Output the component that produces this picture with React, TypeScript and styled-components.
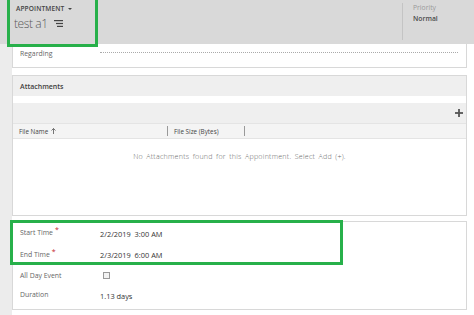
import React from "react";
import styled, { createGlobalStyle } from "styled-components";

const GlobalStyle = createGlobalStyle`
  html, body {
    margin: 0;
    padding: 0;
    background: #ffffff;
    font-family: "Open Sans", "Noto Sans", sans-serif;
    color: #444444;
  }
`;

const Page = styled.div`
  position: relative;
  width: 474px;
  height: 315px;
  overflow: hidden;
  display: flex;
  flex-direction: column;
`;

/* header strip */
const Header = styled.div`
  height: 44px;
  flex-shrink: 0;
  background: #d9d9d9;
  display: flex;
`;

const TitleBlock = styled.div`
  flex: 1;
  padding: 4px 0 0 16px;
  display: flex;
  flex-direction: column;
`;

const EntityType = styled.div`
  display: flex;
  align-items: center;
  gap: 4px;
  font-size: 6.6px;
  font-weight: 600;
  letter-spacing: 0.1px;
  color: #444;
  height: 9px;
`;

const Caret = styled.span`
  width: 0;
  height: 0;
  border-left: 2px solid transparent;
  border-right: 2px solid transparent;
  border-top: 2.5px solid #444;
`;

const RecordName = styled.div`
  display: flex;
  align-items: center;
  gap: 6px;
  margin-top: 2px;
  margin-left: -2px;
  font-size: 12px;
  font-weight: 300;
  letter-spacing: -0.4px;
  color: #5a5a5a;
`;

const PriorityBlock = styled.div`
  width: 61px;
  margin: 3px 0 4px;
  border-left: 1px solid #c4c4c4;
  padding: 0 0 0 10px;
  display: flex;
  flex-direction: column;
`;

const PriorityLabel = styled.div`
  font-size: 6.8px;
  color: #9a9a9a;
  height: 11px;
`;

const PriorityValue = styled.div`
  font-size: 6.8px;
  font-weight: 600;
  color: #4a4a4a;
`;

/* body */
const Body = styled.div`
  flex: 1;
  display: flex;
`;

const Rail = styled.div`
  width: 12px;
  background: #ececec;
`;

const Content = styled.div`
  width: 455px;
  display: flex;
  flex-direction: column;
`;

const Card = styled.div<{ $noTop?: boolean; $height: number; $gap: number }>`
  box-sizing: border-box;
  height: ${(p) => p.$height}px;
  margin-bottom: ${(p) => p.$gap}px;
  border: 1px solid #d8d8d8;
  border-top: ${(p) => (p.$noTop ? "none" : "1px solid #d8d8d8")};
  background: #fff;
  display: flex;
  flex-direction: column;
`;

const FieldRow = styled.div<{ $h: number }>`
  height: ${(p) => p.$h}px;
  display: flex;
  align-items: center;
  padding-left: 7px;
`;

const Label = styled.div`
  width: 80px;
  font-size: 6.9px;
  color: #666;
  display: flex;
  align-items: flex-start;
`;

const Required = styled.span`
  color: #c4262e;
  font-size: 7px;
  margin-left: 2px;
  margin-top: -3px;
`;

const Value = styled.div`
  font-size: 7.4px;
  color: #333;
  margin-top: 2px;
  white-space: pre;
`;

const DottedField = styled.div`
  flex: 1;
  margin-right: 8px;
  border-bottom: 1px dotted #aaa;
  margin-top: -2px;
`;

const SectionHeader = styled.div`
  height: 20px;
  background: #efefef;
  display: flex;
  align-items: center;
  padding-left: 7px;
  font-size: 7px;
  font-weight: 600;
  color: #3e3e3e;
`;

const Toolbar = styled.div`
  height: 20px;
  margin-top: 7px;
  background: #efefef;
  display: flex;
  align-items: center;
  justify-content: flex-end;
  padding-right: 3px;
`;

const GridHead = styled.div`
  height: 14px;
  background: #f4f4f4;
  border-top: 1px solid #e4e4e4;
  border-bottom: 1px solid #e4e4e4;
  display: flex;
  align-items: center;
`;

const HeadCell = styled.div<{ $w: number }>`
  box-sizing: border-box;
  width: ${(p) => p.$w}px;
  padding-left: 6px;
  font-size: 6.3px;
  color: #444;
  display: flex;
  align-items: center;
  gap: 3px;
  height: 10px;
  border-right: 1px solid #999;
`;

const EmptyMessage = styled.div`
  text-align: center;
  margin-top: 12px;
  font-size: 7.1px;
  font-weight: 300;
  letter-spacing: 0.25px;
  word-spacing: 1.2px;
  color: #6a6a6a;
`;

const Checkbox = styled.span`
  box-sizing: border-box;
  width: 7px;
  height: 7px;
  margin-left: 3px;
  border: 1px solid #999;
  background: #f2f2f2;
  display: inline-block;
`;

/* annotation frames drawn over the screenshot */
const Highlight = styled.div<{ $x: number; $y: number; $w: number; $h: number }>`
  position: absolute;
  left: ${(p) => p.$x}px;
  top: ${(p) => p.$y}px;
  width: ${(p) => p.$w}px;
  height: ${(p) => p.$h}px;
  box-sizing: border-box;
  border: 3px solid #27b04a;
  pointer-events: none;
`;

const ListIcon = () => (
  <svg width="9" height="7" viewBox="0 0 9 7">
    <rect x="0" y="0" width="9" height="1.2" fill="#444" />
    <rect x="2" y="2.9" width="7" height="1.2" fill="#444" />
    <rect x="3" y="5.8" width="6" height="1.2" fill="#444" />
  </svg>
);

const PlusIcon = () => (
  <svg width="8" height="8" viewBox="0 0 8 8">
    <rect x="3.1" y="0" width="1.8" height="8" fill="#555" />
    <rect x="0" y="3.1" width="8" height="1.8" fill="#555" />
  </svg>
);

const SortArrow = () => (
  <svg width="5" height="6" viewBox="0 0 5 6">
    <path d="M2.5 0.5 L2.5 6 M0.5 2.5 L2.5 0.5 L4.5 2.5" stroke="#555" strokeWidth="0.8" fill="none" />
  </svg>
);

export default function App() {
  return (
    <>
      <GlobalStyle />
      <Page>
        <Header>
          <TitleBlock>
            <EntityType>
              APPOINTMENT <Caret />
            </EntityType>
            <RecordName>
              test a1 <ListIcon />
            </RecordName>
          </TitleBlock>
          <PriorityBlock>
            <PriorityLabel>Priority</PriorityLabel>
            <PriorityValue>Normal</PriorityValue>
          </PriorityBlock>
        </Header>
        <Body>
          <Rail />
          <Content>
            <Card $noTop $height={24} $gap={7}>
              <FieldRow $h={19}>
                <Label>Regarding</Label>
                <DottedField />
              </FieldRow>
            </Card>
            <Card $height={141} $gap={5}>
              <SectionHeader>Attachments</SectionHeader>
              <Toolbar>
                <PlusIcon />
              </Toolbar>
              <GridHead>
                <HeadCell $w={155}>
                  File Name <SortArrow />
                </HeadCell>
                <HeadCell $w={77}>File Size (Bytes)</HeadCell>
              </GridHead>
              <EmptyMessage>No Attachments found for this Appointment. Select Add (+).</EmptyMessage>
            </Card>
            <Card $height={89} $gap={0}>
              <FieldRow $h={21}>
                <Label>
                  Start Time<Required>*</Required>
                </Label>
                <Value>2/2/2019  3:00 AM</Value>
              </FieldRow>
              <FieldRow $h={22}>
                <Label>
                  End Time<Required>*</Required>
                </Label>
                <Value>2/3/2019  6:00 AM</Value>
              </FieldRow>
              <FieldRow $h={21}>
                <Label>All Day Event</Label>
                <Checkbox />
              </FieldRow>
              <FieldRow $h={17}>
                <Label>Duration</Label>
                <Value>1.13 days</Value>
              </FieldRow>
            </Card>
          </Content>
        </Body>
        <Highlight $x={7} $y={-3} $w={91} $h={50} />
        <Highlight $x={10} $y={220} $w={333} $h={45} />
      </Page>
    </>
  );
}
